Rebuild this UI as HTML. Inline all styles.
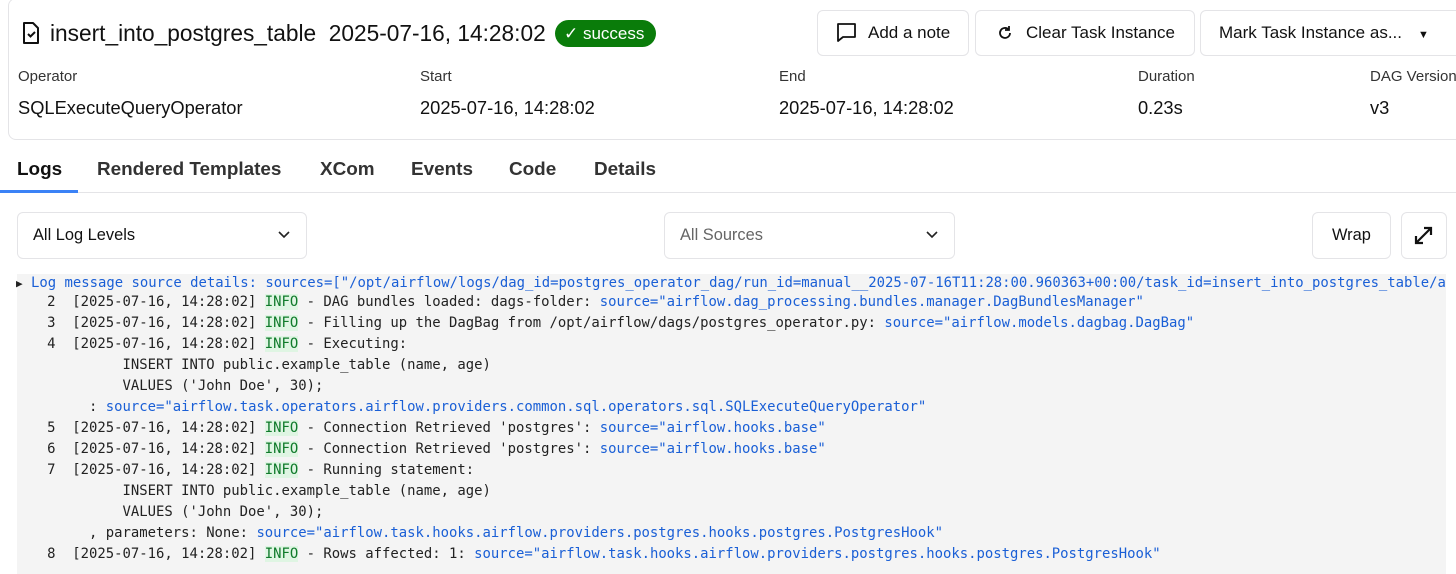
<!DOCTYPE html>
<html><head><meta charset="utf-8"><style>
*{box-sizing:border-box;margin:0;padding:0}
body{width:1456px;height:570px;overflow:hidden;background:#fff;font-family:"Liberation Sans",sans-serif;color:#111;position:relative}
.abs{position:absolute;white-space:nowrap}
.card{left:8px;top:-2px;width:1470px;height:142px;border:1px solid #e4e4e7;border-radius:8px}
.title{left:50px;top:20px;font-size:22.7px;font-weight:500;white-space:nowrap}
.badge{left:555px;top:20px;width:101px;height:27px;background:#0a7c0a;border-radius:14px;color:#fff;font-size:17px;line-height:27px;padding-left:9px;white-space:nowrap}
.btn{border:1px solid #e4e4e7;border-radius:6px;height:46px;top:10px;font-size:17px;line-height:44px;white-space:nowrap}
.lbl{font-size:15px;color:#333;top:68px}
.val{font-size:18.3px;top:97px}
.tab{top:159px;font-size:18.9px;font-weight:bold;color:#333}
.sel{top:212px;height:47px;border:1px solid #e4e4e7;border-radius:6px;font-size:16.4px;line-height:45px;padding-left:15px}
.log{left:17px;top:274px;width:1429px;height:300px;background:#f4f4f4}
pre{position:absolute;font-family:"DejaVu Sans Mono","Liberation Mono",monospace;font-size:13.92px;line-height:21px;color:#222;white-space:pre}
.b{color:#1a5fd6}
.i{color:#0f7a2a;background:#dff5e3}
</style></head><body>
<div class="abs card"></div>
<svg class="abs" style="left:20px;top:21px" width="22" height="24" viewBox="0 0 22 24"><path d="M4 2h9l5 5v15H4z" fill="none" stroke="#111" stroke-width="2" stroke-linejoin="round"/><path d="M8 13l2.5 2.5L15 11" fill="none" stroke="#111" stroke-width="2"/></svg>
<div class="abs title">insert_into_postgres_table&nbsp; 2025-07-16, 14:28:02</div>
<div class="abs badge">✓ success</div>
<div class="abs btn" style="left:817px;width:152px;padding-left:50px">Add a note</div>
<svg class="abs" style="left:836px;top:22px" width="22" height="22" viewBox="0 0 22 22"><path d="M2 2h17v13H7l-5 4z" fill="none" stroke="#111" stroke-width="1.8" stroke-linejoin="round"/></svg>
<div class="abs btn" style="left:975px;width:220px;padding-left:50px">Clear Task Instance</div>
<svg class="abs" style="left:996px;top:24px" width="18" height="18" viewBox="0 0 18 18"><path d="M14 9a5 5 0 1 1-1.5-3.6" fill="none" stroke="#111" stroke-width="1.8"/><path d="M13 2v4h-4" fill="none" stroke="#111" stroke-width="1.8"/></svg>
<div class="abs btn" style="left:1200px;width:270px;padding-left:18px">Mark Task Instance as...<span style="font-size:11px;margin-left:16px">▼</span></div>
<div class="abs lbl" style="left:18px">Operator</div><div class="abs val" style="left:18px">SQLExecuteQueryOperator</div>
<div class="abs lbl" style="left:420px">Start</div><div class="abs val" style="left:420px">2025-07-16, 14:28:02</div>
<div class="abs lbl" style="left:779px">End</div><div class="abs val" style="left:779px">2025-07-16, 14:28:02</div>
<div class="abs lbl" style="left:1138px">Duration</div><div class="abs val" style="left:1138px">0.23s</div>
<div class="abs lbl" style="left:1370px">DAG Version</div><div class="abs val" style="left:1370px">v3</div>
<div class="abs tab" style="left:17px;color:#111">Logs</div>
<div class="abs tab" style="left:97px">Rendered Templates</div>
<div class="abs tab" style="left:320px">XCom</div>
<div class="abs tab" style="left:411px">Events</div>
<div class="abs tab" style="left:509px">Code</div>
<div class="abs tab" style="left:594px">Details</div>
<div class="abs" style="left:0;top:192px;width:1456px;height:1px;background:#e4e4e7"></div>
<div class="abs" style="left:0;top:190px;width:78px;height:3px;background:#3b82f6"></div>
<div class="abs sel" style="left:17px;width:290px">All Log Levels</div>
<svg class="abs" style="left:278px;top:230px" width="12" height="9" viewBox="0 0 12 9"><path d="M1 2l5 5 5-5" fill="none" stroke="#222" stroke-width="1.6"/></svg>
<div class="abs sel" style="left:664px;width:291px;color:#666">All Sources</div>
<svg class="abs" style="left:926px;top:230px" width="12" height="9" viewBox="0 0 12 9"><path d="M1 2l5 5 5-5" fill="none" stroke="#222" stroke-width="1.6"/></svg>
<div class="abs sel" style="left:1312px;width:79px;padding-left:19px">Wrap</div>
<div class="abs sel" style="left:1401px;width:46px"></div>
<svg class="abs" style="left:1413px;top:225px" width="21" height="21" viewBox="0 0 21 21"><path d="M3 18L18 3M11 3h7v7M3 11v7h7" fill="none" stroke="#111" stroke-width="2.2"/></svg>
<div class="log abs"></div>
<pre style="left:16px;top:273px;width:1430px;overflow:hidden"><span style="font-size:11px">▶</span> <span class="b">Log message source details: sources=["/opt/airflow/logs/dag_id=postgres_operator_dag/run_id=manual__2025-07-16T11:28:00.960363+00:00/task_id=insert_into_postgres_table/attempt=1.log"]</span></pre>
<pre style="left:22px;top:292px">   2  [2025-07-16, 14:28:02] <span class="i">INFO</span> - DAG bundles loaded: dags-folder: <span class="b">source="airflow.dag_processing.bundles.manager.DagBundlesManager"</span>
   3  [2025-07-16, 14:28:02] <span class="i">INFO</span> - Filling up the DagBag from /opt/airflow/dags/postgres_operator.py: <span class="b">source="airflow.models.dagbag.DagBag"</span>
   4  [2025-07-16, 14:28:02] <span class="i">INFO</span> - Executing:
            INSERT INTO public.example_table (name, age)
            VALUES ('John Doe', 30);
        : <span class="b">source="airflow.task.operators.airflow.providers.common.sql.operators.sql.SQLExecuteQueryOperator"</span>
   5  [2025-07-16, 14:28:02] <span class="i">INFO</span> - Connection Retrieved 'postgres': <span class="b">source="airflow.hooks.base"</span>
   6  [2025-07-16, 14:28:02] <span class="i">INFO</span> - Connection Retrieved 'postgres': <span class="b">source="airflow.hooks.base"</span>
   7  [2025-07-16, 14:28:02] <span class="i">INFO</span> - Running statement:
            INSERT INTO public.example_table (name, age)
            VALUES ('John Doe', 30);
        , parameters: None: <span class="b">source="airflow.task.hooks.airflow.providers.postgres.hooks.postgres.PostgresHook"</span>
   8  [2025-07-16, 14:28:02] <span class="i">INFO</span> - Rows affected: 1: <span class="b">source="airflow.task.hooks.airflow.providers.postgres.hooks.postgres.PostgresHook"</span></pre>
</body></html>
